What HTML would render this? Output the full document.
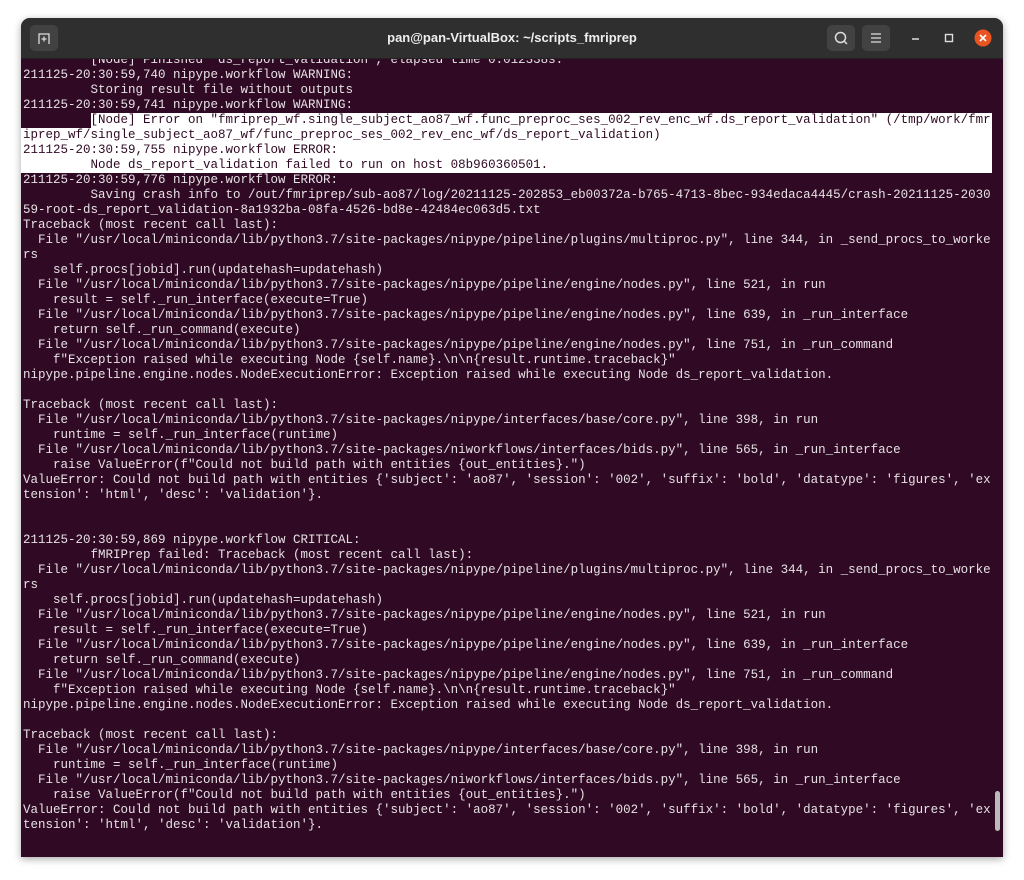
<!DOCTYPE html>
<html><head><meta charset="utf-8"><style>
html,body{margin:0;padding:0;width:1024px;height:880px;background:#fff;overflow:hidden}
.win{position:absolute;left:21px;top:18px;width:982px;height:839px;background:#300a24;border-radius:9px 9px 0 0;box-shadow:0 2px 8px rgba(0,0,0,.35);overflow:hidden}
.tb{position:absolute;left:0;top:0;width:982px;height:40px;background:#2f2f2f;border-bottom:1px solid #222;z-index:2}
.title{position:absolute;left:0;width:982px;top:12px;text-align:center;color:#eee;font:bold 13px "Liberation Sans",sans-serif}
.btn{position:absolute;top:7px;width:28px;height:26px;background:#424242;border-radius:5px}
.term{position:absolute;left:0;top:35px;width:977px;height:804px;overflow:hidden}
pre{position:relative;margin:0 0 0 2px;font:12.5px/15px "Liberation Mono",monospace;color:#e6e1e4;white-space:pre}
.sel{color:#300a24}
.hl{position:absolute;background:#fff}
</style></head><body>
<div class="win">
<div class="tb">
<div class="btn" style="left:9px"><svg width="28" height="26"><path d="M9 19V9h10v10" fill="none" stroke="#ddd" stroke-width="1.3"/><path d="M14 11.5v5M11.5 14h5" stroke="#ddd" stroke-width="1.3"/></svg></div>
<div class="title">pan@pan-VirtualBox: ~/scripts_fmriprep</div>
<div class="btn" style="left:806px"><svg width="28" height="26"><circle cx="13.5" cy="12.5" r="5" fill="none" stroke="#ddd" stroke-width="1.5"/><path d="M17 16l3 3" stroke="#ddd" stroke-width="1.5"/></svg></div>
<div class="btn" style="left:841px"><svg width="28" height="26"><path d="M9 9h10M9 13h10M9 17h10" stroke="#ddd" stroke-width="1.3"/></svg></div>
<svg style="position:absolute;left:885px;top:12px" width="20" height="16"><path d="M6 9h7" stroke="#ddd" stroke-width="1.5"/></svg>
<svg style="position:absolute;left:918px;top:12px" width="20" height="16"><rect x="6.5" y="4.5" width="7" height="7" fill="none" stroke="#ddd" stroke-width="1.4"/></svg>
<svg style="position:absolute;left:952px;top:10px" width="20" height="20"><circle cx="10" cy="10" r="8.5" fill="#e95420"/><path d="M7 7l6 6M13 7l-6 6" stroke="#fff" stroke-width="1.6"/></svg>
</div>
<div class="term">
<div class="hl" style="left:70px;top:60px;width:901px;height:15px"></div>
<div class="hl" style="left:0;top:75px;width:971px;height:45px"></div>
<pre>         [Node] Finished "ds_report_validation", elapsed time 0.012338s.
211125-20:30:59,740 nipype.workflow WARNING:
         Storing result file without outputs
211125-20:30:59,741 nipype.workflow WARNING:
         <span class="sel">[Node] Error on "fmriprep_wf.single_subject_ao87_wf.func_preproc_ses_002_rev_enc_wf.ds_report_validation" (/tmp/work/fmr</span>
<span class="sel">iprep_wf/single_subject_ao87_wf/func_preproc_ses_002_rev_enc_wf/ds_report_validation)</span>
<span class="sel">211125-20:30:59,755 nipype.workflow ERROR:</span>
<span class="sel">         Node ds_report_validation failed to run on host 08b960360501.</span>
211125-20:30:59,776 nipype.workflow ERROR:
         Saving crash info to /out/fmriprep/sub-ao87/log/20211125-202853_eb00372a-b765-4713-8bec-934edaca4445/crash-20211125-2030
59-root-ds_report_validation-8a1932ba-08fa-4526-bd8e-42484ec063d5.txt
Traceback (most recent call last):
  File "/usr/local/miniconda/lib/python3.7/site-packages/nipype/pipeline/plugins/multiproc.py", line 344, in _send_procs_to_worke
rs
    self.procs[jobid].run(updatehash=updatehash)
  File "/usr/local/miniconda/lib/python3.7/site-packages/nipype/pipeline/engine/nodes.py", line 521, in run
    result = self._run_interface(execute=True)
  File "/usr/local/miniconda/lib/python3.7/site-packages/nipype/pipeline/engine/nodes.py", line 639, in _run_interface
    return self._run_command(execute)
  File "/usr/local/miniconda/lib/python3.7/site-packages/nipype/pipeline/engine/nodes.py", line 751, in _run_command
    f"Exception raised while executing Node {self.name}.\n\n{result.runtime.traceback}"
nipype.pipeline.engine.nodes.NodeExecutionError: Exception raised while executing Node ds_report_validation.

Traceback (most recent call last):
  File "/usr/local/miniconda/lib/python3.7/site-packages/nipype/interfaces/base/core.py", line 398, in run
    runtime = self._run_interface(runtime)
  File "/usr/local/miniconda/lib/python3.7/site-packages/niworkflows/interfaces/bids.py", line 565, in _run_interface
    raise ValueError(f"Could not build path with entities {out_entities}.")
ValueError: Could not build path with entities {'subject': 'ao87', 'session': '002', 'suffix': 'bold', 'datatype': 'figures', 'ex
tension': 'html', 'desc': 'validation'}.


211125-20:30:59,869 nipype.workflow CRITICAL:
         fMRIPrep failed: Traceback (most recent call last):
  File "/usr/local/miniconda/lib/python3.7/site-packages/nipype/pipeline/plugins/multiproc.py", line 344, in _send_procs_to_worke
rs
    self.procs[jobid].run(updatehash=updatehash)
  File "/usr/local/miniconda/lib/python3.7/site-packages/nipype/pipeline/engine/nodes.py", line 521, in run
    result = self._run_interface(execute=True)
  File "/usr/local/miniconda/lib/python3.7/site-packages/nipype/pipeline/engine/nodes.py", line 639, in _run_interface
    return self._run_command(execute)
  File "/usr/local/miniconda/lib/python3.7/site-packages/nipype/pipeline/engine/nodes.py", line 751, in _run_command
    f"Exception raised while executing Node {self.name}.\n\n{result.runtime.traceback}"
nipype.pipeline.engine.nodes.NodeExecutionError: Exception raised while executing Node ds_report_validation.

Traceback (most recent call last):
  File "/usr/local/miniconda/lib/python3.7/site-packages/nipype/interfaces/base/core.py", line 398, in run
    runtime = self._run_interface(runtime)
  File "/usr/local/miniconda/lib/python3.7/site-packages/niworkflows/interfaces/bids.py", line 565, in _run_interface
    raise ValueError(f"Could not build path with entities {out_entities}.")
ValueError: Could not build path with entities {'subject': 'ao87', 'session': '002', 'suffix': 'bold', 'datatype': 'figures', 'ex
tension': 'html', 'desc': 'validation'}.</pre></div>
<div style="position:absolute;left:974px;top:773px;width:5px;height:40px;background:#bbb;border-radius:3px"></div>
</div>
</body></html>
